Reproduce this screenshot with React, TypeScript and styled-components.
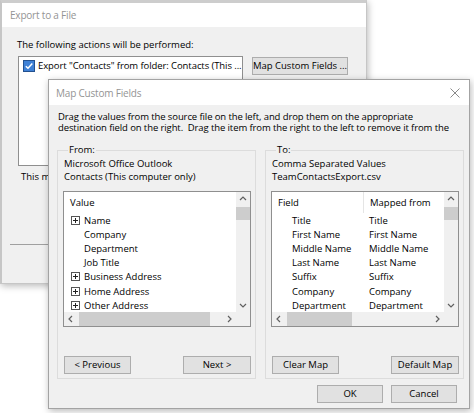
import React from 'react';
import styled, { createGlobalStyle } from 'styled-components';

const Global = createGlobalStyle`
  html, body { margin: 0; padding: 0; background: #fff; }
  body {
    width: 474px; height: 413px; overflow: hidden;
    font-family: "Open Sans", "Noto Sans", sans-serif;
    font-size: 9.5px; color: #000;
  }
  * { box-sizing: border-box; }
`;

const Desktop = styled.div`
  position: relative;
  width: 474px;
  height: 413px;
  overflow: hidden;
  background: #fff;
`;

const Window = styled.div<{ $x: number; $y: number; $w: number; $h: number }>`
  position: absolute;
  left: ${(p) => p.$x}px;
  top: ${(p) => p.$y}px;
  width: ${(p) => p.$w}px;
  height: ${(p) => p.$h}px;
  background: #f0f0f0;
  border: 1px solid #a3a3a3;
  box-shadow: 1px 2px 7px rgba(0, 0, 0, 0.28);
  display: flex;
  flex-direction: column;
  overflow: hidden;
`;

const BackFrame = styled(Window)`
  border-color: #c6c6c6;
  border-left: 2px solid #c6c6c6;
  border-top: 3px solid #cdcdcd;
`;

const TitleBar = styled.div<{ $pad: number }>`
  height: ${(p) => (p.$pad === 8 ? 24 : 25)}px;
  flex: none;
  background: #fff;
  display: flex;
  align-items: center;
  justify-content: space-between;
  padding: 0 8px 0 ${(p) => p.$pad}px;
`;

const TitleText = styled.span`
  font-size: 10px;
  letter-spacing: -0.2px;
  color: #949494;
  white-space: nowrap;
`;

const CloseBox = styled.div`
  width: 12px;
  height: 12px;
  display: flex;
  align-items: center;
  justify-content: center;
`;

/* ---- back window ---- */
const BackBody = styled.div`
  flex: 1;
  display: flex;
  flex-direction: column;
  padding: 12px 15px 0 15px;
`;

const Line = styled.div`
  line-height: 12px;
  height: 12px;
  white-space: nowrap;
`;

const ActionRow = styled.div`
  display: flex;
  align-items: flex-start;
  gap: 9px;
  margin-top: 5px;
  margin-left: 1px;
`;

const ActionList = styled.div`
  width: 225px;
  height: 110px;
  background: #fff;
  border: 1px solid #8f8f8f;
  padding: 2px 4px;
`;

const ActionItem = styled.div`
  display: flex;
  align-items: center;
  gap: 3px;
  height: 13px;
  white-space: nowrap;
  letter-spacing: -0.08px;
`;

const CheckBox = styled.span`
  width: 12px;
  height: 12px;
  flex: none;
  background: #3f81d6;
  border: 1px solid #23518f;
  display: flex;
  align-items: center;
  justify-content: center;
`;

const Note = styled(Line)`
  margin-top: 5px;
  margin-left: 4px;
`;

const Separator = styled.div`
  height: 1px;
  background: #a0a0a0;
  margin: 61px -7px 0 -7px;
`;

/* ---- buttons ---- */
const Button = styled.div<{ $w: number }>`
  width: ${(p) => p.$w}px;
  height: 18px;
  flex: none;
  background: #e1e1e1;
  border: 1px solid #adadad;
  display: flex;
  align-items: center;
  justify-content: center;
  white-space: nowrap;
  line-height: 12px;
`;

const TopButton = styled(Button)`
  margin-top: 1px;
`;

/* ---- front window ---- */
const FrontBody = styled.div`
  flex: 1;
  display: flex;
  flex-direction: column;
  padding: 6px 5px 4px 8px;
`;

const Description = styled.div`
  margin-left: 1px;
  line-height: 11px;
  height: 22px;
  white-space: nowrap;
  letter-spacing: -0.1px;
`;

const Groups = styled.div`
  display: flex;
  gap: 9px;
  margin-top: 11px;
`;

const Group = styled.fieldset`
  flex: 1;
  min-width: 0;
  margin: 0;
  padding: 0 4px 4px 5px;
  border: 1px solid #dcdcdc;
  display: flex;
  flex-direction: column;
`;

const Legend = styled.legend`
  padding: 0 1px;
  margin-left: 5px;
  line-height: 12px;
  height: 12px;
`;

const SourceInfo = styled.div`
  padding-top: 1px;
  line-height: 13px;
  white-space: nowrap;
  padding-left: 1px;
`;

const ListFrame = styled.div`
  margin-top: 8px;
  height: 136px;
  border: 1px solid #8f8f8f;
  background: #fff;
  display: grid;
  grid-template-columns: 1fr 14px;
  grid-template-rows: 1fr 14px;
  overflow: hidden;
`;

const ListContent = styled.div`
  overflow: hidden;
  display: flex;
  flex-direction: column;
`;

const HeaderRow = styled.div<{ $cols: string }>`
  height: 21px;
  flex: none;
  display: grid;
  grid-template-columns: ${(p) => p.$cols};
  align-items: center;
`;

const HeaderCell = styled.div<{ $divider?: boolean }>`
  padding-left: 6px;
  height: 100%;
  display: flex;
  align-items: center;
  white-space: nowrap;
  border-left: ${(p) => (p.$divider ? '1px solid #e5e5e5' : 'none')};
`;

const Row = styled.div<{ $cols: string }>`
  height: 14.2px;
  flex: none;
  display: grid;
  grid-template-columns: ${(p) => p.$cols};
  align-items: center;
  white-space: nowrap;
`;

const TreeCell = styled.div`
  display: flex;
  align-items: center;
  padding-left: 7px;
  gap: 4px;
`;

const PlusSlot = styled.span`
  width: 9px;
  height: 9px;
  flex: none;
  display: flex;
`;

const Cell = styled.div<{ $indent: number }>`
  padding-left: ${(p) => p.$indent}px;
`;

const VScroll = styled.div`
  background: #f0f0f0;
  display: flex;
  flex-direction: column;
`;

const ScrollBtn = styled.div`
  width: 14px;
  height: 14px;
  flex: none;
  display: flex;
  align-items: center;
  justify-content: center;
`;

const VThumb = styled.div`
  height: 13px;
  margin-top: 1px;
  background: #cdcdcd;
  flex: none;
`;

const Fill = styled.div`
  flex: 1;
`;

const HScroll = styled.div`
  background: #f0f0f0;
  display: flex;
`;

const HThumb = styled.div<{ $w: number }>`
  width: ${(p) => p.$w}px;
  margin-left: 1px;
  background: #cdcdcd;
  flex: none;
`;

const Corner = styled.div`
  background: #f0f0f0;
`;

const GroupButtons = styled.div`
  display: flex;
  justify-content: space-between;
  margin: 29px 0 0 1px;
`;

const Footer = styled.div`
  display: flex;
  justify-content: flex-end;
  gap: 8px;
  margin-top: 6px;
  padding-right: 7px;
`;

/* ---- icons ---- */
type Dir = 'up' | 'down' | 'left' | 'right';
const chevronPaths: Record<Dir, string> = {
  up: 'M1 5 L4 2 L7 5',
  down: 'M1 3 L4 6 L7 3',
  left: 'M5 1 L2 4 L5 7',
  right: 'M3 1 L6 4 L3 7',
};

function Chevron({ dir }: { dir: Dir }) {
  return (
    <svg width="8" height="8" viewBox="0 0 8 8">
      <path d={chevronPaths[dir]} fill="none" stroke="#606060" strokeWidth="1.2" />
    </svg>
  );
}

function PlusBox() {
  return (
    <svg width="9" height="9" viewBox="0 0 9 9">
      <rect x="0.5" y="0.5" width="8" height="8" fill="#fff" stroke="#555" />
      <path d="M2 4.5 H7 M4.5 2 V7" stroke="#222" strokeWidth="1" />
    </svg>
  );
}

function CloseIcon() {
  return (
    <svg width="10" height="10" viewBox="0 0 10 10">
      <path d="M0.5 0.5 L9.5 9.5 M9.5 0.5 L0.5 9.5" stroke="#8a8a8a" strokeWidth="1" />
    </svg>
  );
}

function CheckMark() {
  return (
    <svg width="10" height="10" viewBox="0 0 10 10">
      <path d="M1.8 5.2 L4 7.3 L8.3 2.6" fill="none" stroke="#fff" strokeWidth="1.5" />
    </svg>
  );
}

function Scrollbars({ thumb }: { thumb: number }) {
  return (
    <>
      <VScroll>
        <ScrollBtn><Chevron dir="up" /></ScrollBtn>
        <VThumb />
        <Fill />
        <ScrollBtn><Chevron dir="down" /></ScrollBtn>
      </VScroll>
      <HScroll>
        <ScrollBtn><Chevron dir="left" /></ScrollBtn>
        <HThumb $w={thumb} />
        <Fill />
        <ScrollBtn><Chevron dir="right" /></ScrollBtn>
      </HScroll>
      <Corner />
    </>
  );
}

const sourceRows = [
  { label: 'Name', plus: true },
  { label: 'Company', plus: false },
  { label: 'Department', plus: false },
  { label: 'Job Title', plus: false },
  { label: 'Business Address', plus: true },
  { label: 'Home Address', plus: true },
  { label: 'Other Address', plus: true },
];

const mappedRows = ['Title', 'First Name', 'Middle Name', 'Last Name', 'Suffix', 'Company', 'Department'];

const MAP_COLS = '91px 1fr';

export default function App() {
  return (
    <Desktop>
      <Global />
      <BackFrame $x={0} $y={0} $w={367} $h={284}>
        <TitleBar $pad={8}>
          <TitleText>Export to a File</TitleText>
        </TitleBar>
        <BackBody>
          <Line>The following actions will be performed:</Line>
          <ActionRow>
            <ActionList>
              <ActionItem>
                <CheckBox><CheckMark /></CheckBox>
                <span>Export "Contacts" from folder: Contacts (This ...</span>
              </ActionItem>
            </ActionList>
            <TopButton $w={96}>Map Custom Fields ...</TopButton>
          </ActionRow>
          <Note>This may take a few minutes.</Note>
          <Separator />
        </BackBody>
      </BackFrame>

      <Window $x={48} $y={79} $w={422} $h={330}>
        <TitleBar $pad={7}>
          <TitleText>Map Custom Fields</TitleText>
          <CloseBox><CloseIcon /></CloseBox>
        </TitleBar>
        <FrontBody>
          <Description>
            Drag the values from the source file on the left, and drop them on the appropriate
            <br />
            destination field on the right.&nbsp; Drag the item from the right to the left to remove it from the
          </Description>
          <Groups>
            <Group>
              <Legend>From:</Legend>
              <SourceInfo>
                Microsoft Office Outlook
                <br />
                Contacts (This computer only)
              </SourceInfo>
              <ListFrame>
                <ListContent>
                  <HeaderRow $cols="1fr">
                    <HeaderCell>Value</HeaderCell>
                  </HeaderRow>
                  {sourceRows.map((r) => (
                    <Row key={r.label} $cols="1fr">
                      <TreeCell>
                        <PlusSlot>{r.plus ? <PlusBox /> : null}</PlusSlot>
                        <span>{r.label}</span>
                      </TreeCell>
                    </Row>
                  ))}
                </ListContent>
                <Scrollbars thumb={131} />
              </ListFrame>
              <GroupButtons>
                <Button $w={67}>&lt; Previous</Button>
                <Button $w={68}>Next &gt;</Button>
              </GroupButtons>
            </Group>
            <Group>
              <Legend>To:</Legend>
              <SourceInfo>
                Comma Separated Values
                <br />
                TeamContactsExport.csv
              </SourceInfo>
              <ListFrame>
                <ListContent>
                  <HeaderRow $cols={MAP_COLS}>
                    <HeaderCell>Field</HeaderCell>
                    <HeaderCell $divider>Mapped from</HeaderCell>
                  </HeaderRow>
                  {mappedRows.map((r) => (
                    <Row key={r} $cols={MAP_COLS}>
                      <Cell $indent={20}>{r}</Cell>
                      <Cell $indent={6}>{r}</Cell>
                    </Row>
                  ))}
                </ListContent>
                <Scrollbars thumb={65} />
              </ListFrame>
              <GroupButtons>
                <Button $w={67}>Clear Map</Button>
                <Button $w={68}>Default Map</Button>
              </GroupButtons>
            </Group>
          </Groups>
          <Footer>
            <Button $w={66}>OK</Button>
            <Button $w={66}>Cancel</Button>
          </Footer>
        </FrontBody>
      </Window>
    </Desktop>
  );
}
